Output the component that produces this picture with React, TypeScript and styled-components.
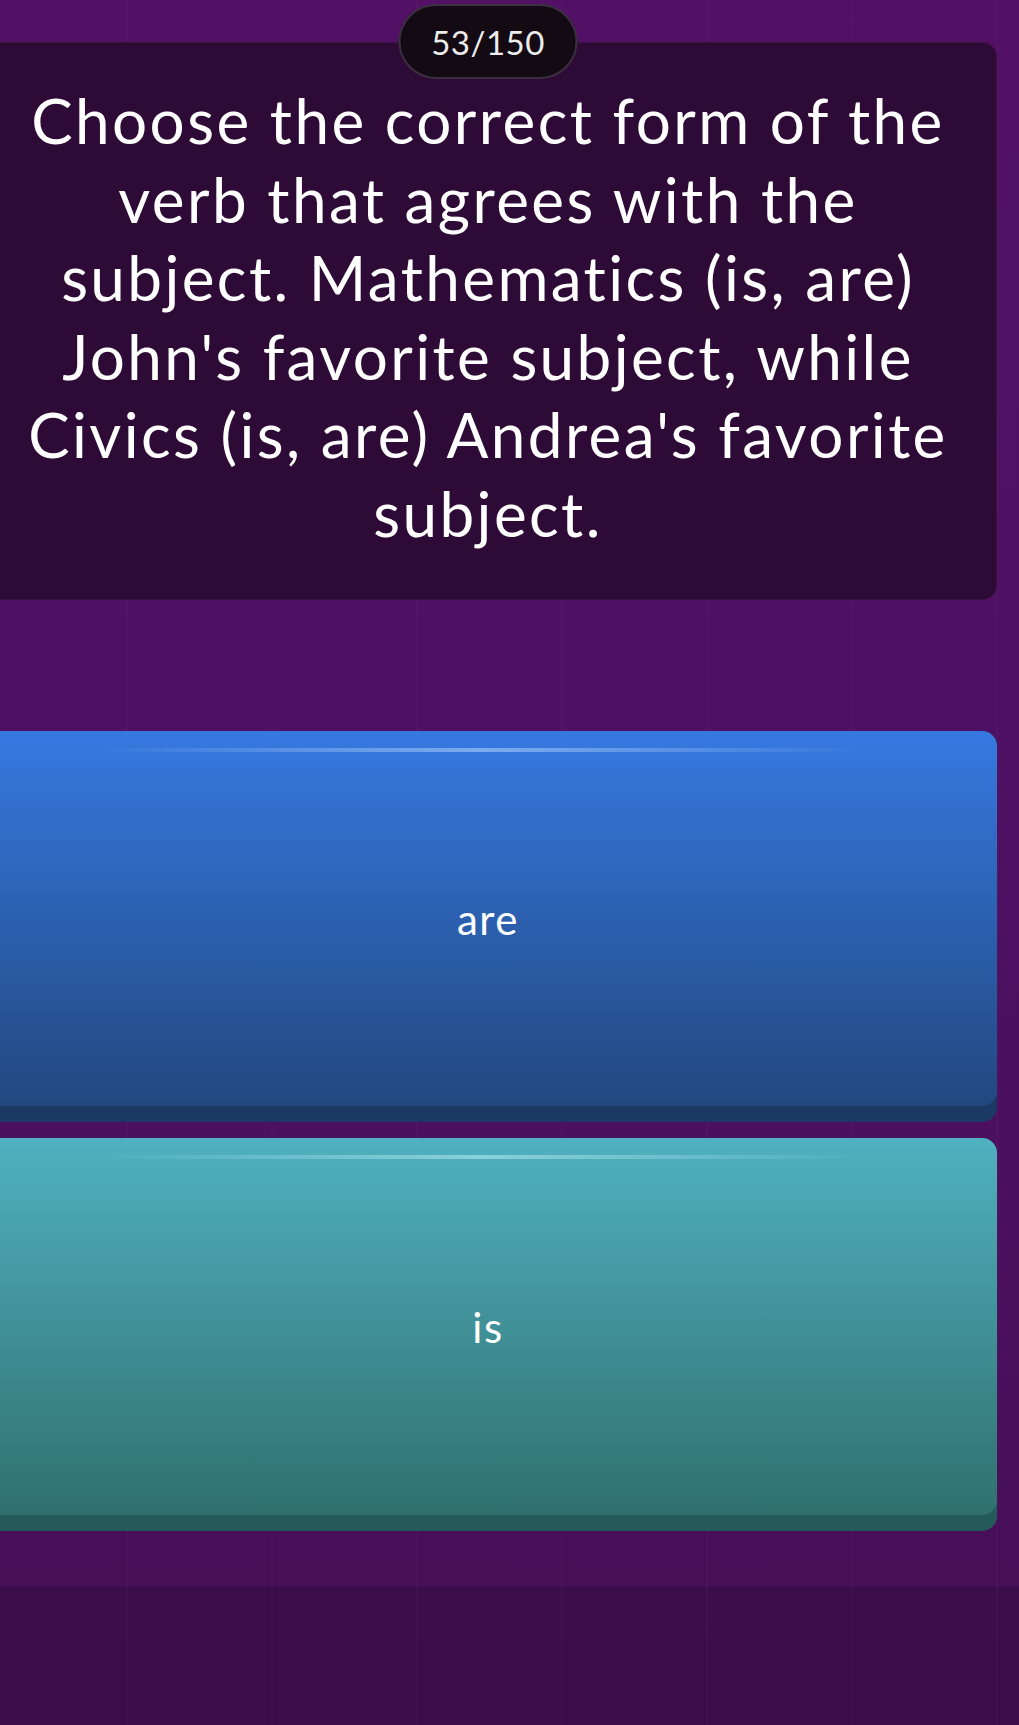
import React from 'react'
import styled, { createGlobalStyle } from 'styled-components'

const GlobalStyle = createGlobalStyle`
  html, body {
    margin: 0;
    padding: 0;
  }
  body {
    font-family: Lato, 'Noto Sans', sans-serif;
    background: #4f1063;
    overflow: hidden;
  }
`

const Page = styled.div`
  position: relative;
  min-height: 1725px;
  background:
    repeating-linear-gradient(90deg, transparent 0 126px, rgba(255, 255, 255, 0.014) 126px 128px, transparent 128px 145px),
    linear-gradient(180deg, #521165 0px, #4c1061 1100px, #470f58 1586px, #3c0d4b 1587px, #3b0c49 1725px);
`

const Stage = styled.div`
  margin-left: -21px;
  width: 1018px;
  padding-top: 42px;
`

const QuestionCard = styled.div`
  position: relative;
  height: 558px;
  border-radius: 15px;
  background: #2e0b37;
  box-shadow: inset 0 0 0 1px rgba(255, 255, 255, 0.04);
  display: flex;
  align-items: flex-start;
  justify-content: center;
  box-sizing: border-box;
  padding-top: 39px;
`

const Counter = styled.div`
  position: absolute;
  top: -38px;
  left: 50%;
  transform: translateX(-50%);
  width: 179px;
  height: 75px;
  box-sizing: border-box;
  border-radius: 38px;
  background: #130a13;
  border: 2px solid #3a3040;
  color: #ececec;
  font-size: 33px;
  display: flex;
  align-items: center;
  justify-content: center;
  letter-spacing: 0.5px;
`

const QuestionText = styled.div`
  color: #ffffff;
  font-size: 62px;
  letter-spacing: 2.4px;
  line-height: 78.6px;
  text-align: center;
  white-space: nowrap;
`

const Answers = styled.div`
  margin-top: 131px;
  display: flex;
  flex-direction: column;
  gap: 16px;
`

type Tone = 'blue' | 'teal'

const tones: Record<Tone, { top: string, bottom: string, edge: string, shine: string }> = {
  blue: { top: '#3679e1', bottom: '#22487f', edge: '#1c3965', shine: 'rgba(190, 220, 255, 0.75)' },
  teal: { top: '#50b1c0', bottom: '#30706f', edge: '#255a5b', shine: 'rgba(190, 240, 245, 0.75)' }
}

const AnswerButton = styled.div<{ $tone: Tone }>`
  border-radius: 15px;
  background: ${p => tones[p.$tone].edge};
  padding-bottom: 16px;
`

const AnswerFace = styled.div<{ $tone: Tone, $height: number }>`
  position: relative;
  height: ${p => p.$height}px;
  border-radius: 15px;
  background: linear-gradient(180deg, ${p => tones[p.$tone].top} 0%, ${p => tones[p.$tone].bottom} 100%);
  display: flex;
  align-items: center;
  justify-content: center;
  color: #ffffff;
  font-size: 42px;
  letter-spacing: 1.5px;
`

const Shine = styled.div<{ $tone: Tone }>`
  position: absolute;
  top: 17px;
  left: 118px;
  right: 130px;
  height: 4px;
  border-radius: 2px;
  background: linear-gradient(90deg, transparent 0%, ${p => tones[p.$tone].shine} 50%, transparent 100%);
  opacity: 0.7;
`

const lines = [
  'Choose the correct form of the',
  'verb that agrees with the',
  'subject. Mathematics (is, are)',
  'John\'s favorite subject, while',
  'Civics (is, are) Andrea\'s favorite',
  'subject.'
]

const answers: { label: string, tone: Tone, height: number }[] = [
  { label: 'are', tone: 'blue', height: 375 },
  { label: 'is', tone: 'teal', height: 377 }
]

const App: React.FC = () => {
  return (
    <>
      <GlobalStyle />
      <Page>
        <Stage>
          <QuestionCard>
            <Counter>53/150</Counter>
            <QuestionText>
              {lines.map(line => (
                <div key={line}>{line}</div>
              ))}
            </QuestionText>
          </QuestionCard>
          <Answers>
            {answers.map(answer => (
              <AnswerButton key={answer.label} $tone={answer.tone}>
                <AnswerFace $tone={answer.tone} $height={answer.height}>
                  <Shine $tone={answer.tone} />
                  {answer.label}
                </AnswerFace>
              </AnswerButton>
            ))}
          </Answers>
        </Stage>
      </Page>
    </>
  )
}

export default App
